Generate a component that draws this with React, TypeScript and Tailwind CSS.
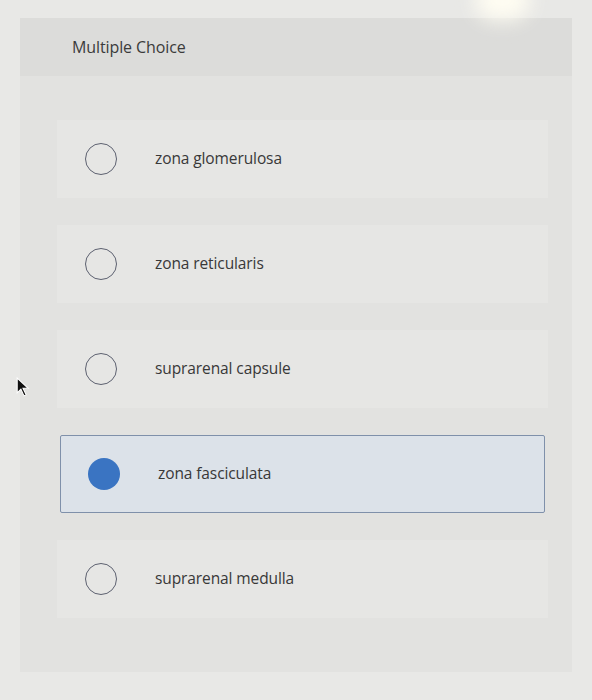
const options = [
  { label: "zona glomerulosa", selected: false },
  { label: "zona reticularis", selected: false },
  { label: "suprarenal capsule", selected: false },
  { label: "zona fasciculata", selected: true },
  { label: "suprarenal medulla", selected: false },
];

const App = () => {
  return (
    <main className="relative w-[592px] h-[700px] overflow-hidden bg-[#e8e8e6] pt-[18px] pl-[20px] font-['Open_Sans',sans-serif]">
      <div className="w-[552px] h-[654px] bg-[#e2e2e0]">
        <div className="h-[58px] bg-[#dcdcda] pl-[52px] flex items-center">
          <p className="text-[16px] text-[#3b3b3b] tracking-[-0.1px]">Multiple Choice</p>
        </div>
        <div className="flex flex-col gap-[27px] pt-[44px] pl-[37px] pr-[24px]">
          {options.map((option, index) => {
            return (
              <div
                key={index}
                className={
                  option.selected
                    ? "flex items-center h-[78px] mx-[3px] bg-[#dce2e9] border border-[#7f90aa] rounded-[2px] pl-[27px]"
                    : "flex items-center h-[78px] bg-[#e6e6e4] pl-[28px]"
                }
              >
                {option.selected ? (
                  <span className="w-[32px] h-[32px] rounded-full bg-[#3a74c2] shrink-0" />
                ) : (
                  <span className="w-[32px] h-[32px] rounded-full border-[1.5px] border-[#5d6170] shrink-0" />
                )}
                <span className="ml-[38px] text-[15.5px] text-[#383838] tracking-[-0.1px]">{option.label}</span>
              </div>
            );
          })}
        </div>
      </div>

      {/* mouse pointer */}
      <svg className="absolute left-[16px] top-[377px]" width="15" height="21" viewBox="0 0 14 20">
        <path d="M1 1 L1 15 L4.5 11.5 L7.5 18 L9.5 17 L6.5 10.8 L11.5 10.8 Z" fill="#111" stroke="#fff" strokeWidth="1" />
      </svg>

      {/* glare from the photo */}
      <div className="absolute left-[475px] top-[-20px] w-[55px] h-[40px] rounded-full bg-[#fffdf2] blur-[10px]" />
    </main>
  );
};

export default App;
